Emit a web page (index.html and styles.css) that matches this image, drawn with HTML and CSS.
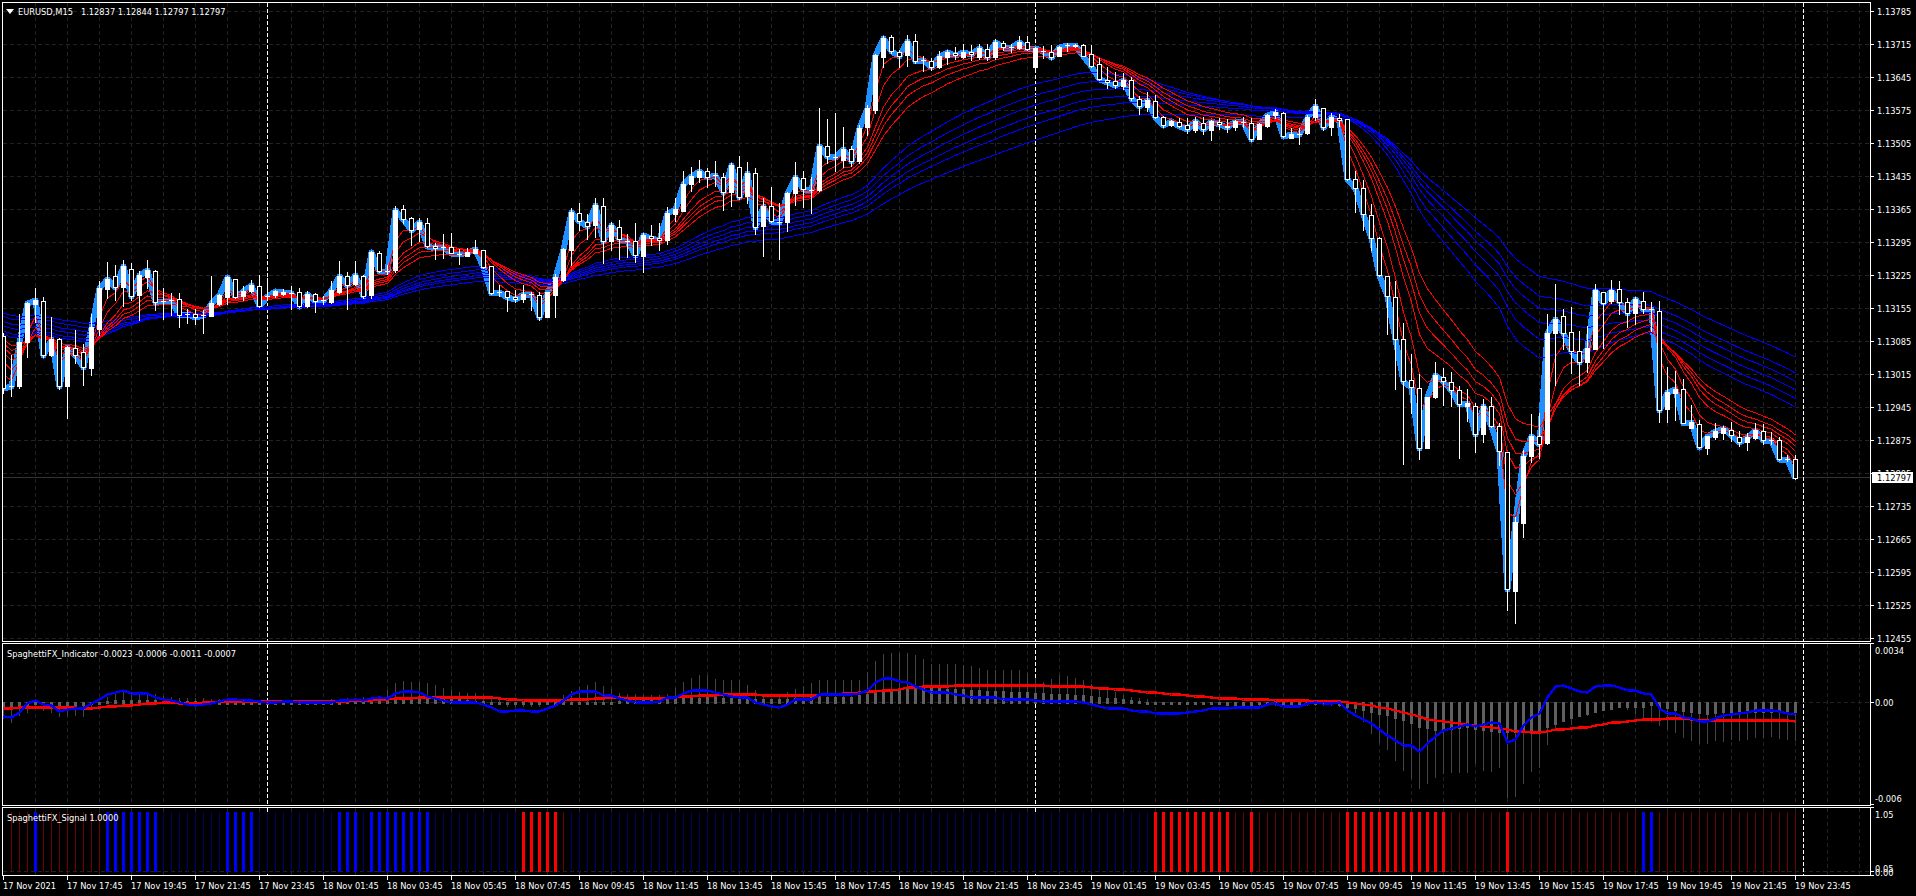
FILE: index.html
```html
<!DOCTYPE html>
<html lang="en">
<head>
<meta charset="utf-8">
<title>EURUSD,M15</title>
<link rel="stylesheet" href="styles.css">
</head>
<body>
<main class="terminal">
  <section class="pane pane-main">
    <div class="plot">
      <svg id="chart-price" class="plot-svg" viewBox="3 3 1867 638" width="1867" height="638"></svg>
      <div class="legend legend-main">
        <svg class="legend-arrow" viewBox="0 0 8 5" width="8" height="5"><polygon points="0,0 8,0 4,5"/></svg>
        <span class="legend-symbol">EURUSD,M15</span>
        <span>1.12837 1.12844 1.12797 1.12797</span>
      </div>
    </div>
    <div class="axis axis-price">
      <span class="level">1.13785</span><span class="level">1.13715</span><span class="level">1.13645</span><span class="level">1.13575</span>
      <span class="level">1.13505</span><span class="level">1.13435</span><span class="level">1.13365</span><span class="level">1.13295</span>
      <span class="level">1.13225</span><span class="level">1.13155</span><span class="level">1.13085</span><span class="level">1.13015</span>
      <span class="level">1.12945</span><span class="level">1.12875</span><span class="level">1.12805</span><span class="level">1.12735</span>
      <span class="level">1.12665</span><span class="level">1.12595</span><span class="level">1.12525</span><span class="level">1.12455</span>
      <span class="bid-tag">1.12797</span>
    </div>
  </section>

  <section class="pane pane-indicator">
    <div class="plot">
      <svg id="chart-indicator" class="plot-svg" viewBox="3 644 1867 161" width="1867" height="161"></svg>
      <div class="legend legend-sub">SpaghettiFX_Indicator -0.0023 -0.0006 -0.0011 -0.0007</div>
    </div>
    <div class="axis axis-scale">
      <i class="tick tick-ind-top"></i><span class="scale-label ind-top">0.0034</span>
      <i class="tick tick-ind-zero"></i><span class="scale-label ind-zero">0.00</span>
      <i class="tick tick-ind-bottom"></i><span class="scale-label ind-bottom">-0.006</span>
    </div>
  </section>

  <section class="pane pane-signal">
    <div class="plot">
      <svg id="chart-signal" class="plot-svg" viewBox="3 808 1867 67" width="1867" height="67"></svg>
      <div class="legend legend-sub">SpaghettiFX_Signal 1.0000</div>
    </div>
    <div class="axis axis-scale">
      <i class="tick tick-sig-top"></i><span class="scale-label sig-top">1.05</span>
      <i class="tick tick-sig-low"></i><span class="scale-label sig-low">0.05</span>
      <i class="tick tick-sig-bottom"></i><span class="scale-label sig-bottom">0.00</span>
    </div>
  </section>

  <footer class="time-axis">
    <span class="time">17 Nov 2021</span><span class="time">17 Nov 17:45</span><span class="time">17 Nov 19:45</span><span class="time">17 Nov 21:45</span><span class="time">17 Nov 23:45</span>
    <span class="time">18 Nov 01:45</span><span class="time">18 Nov 03:45</span><span class="time">18 Nov 05:45</span><span class="time">18 Nov 07:45</span><span class="time">18 Nov 09:45</span><span class="time">18 Nov 11:45</span>
    <span class="time">18 Nov 13:45</span><span class="time">18 Nov 15:45</span><span class="time">18 Nov 17:45</span><span class="time">18 Nov 19:45</span><span class="time">18 Nov 21:45</span><span class="time">18 Nov 23:45</span>
    <span class="time">19 Nov 01:45</span><span class="time">19 Nov 03:45</span><span class="time">19 Nov 05:45</span><span class="time">19 Nov 07:45</span><span class="time">19 Nov 09:45</span><span class="time">19 Nov 11:45</span>
    <span class="time">19 Nov 13:45</span><span class="time">19 Nov 15:45</span><span class="time">19 Nov 17:45</span><span class="time">19 Nov 19:45</span><span class="time">19 Nov 21:45</span><span class="time">19 Nov 23:45</span>
  </footer>
</main>
<script src="chart.js"></script>
</body>
</html>
```

FILE: styles.css
```css
* { box-sizing: border-box; }

html, body {
  margin: 0;
  background: #000;
}

body {
  width: 1916px;
  height: 896px;
  overflow: hidden;
  color: #fff;
  font-family: "DejaVu Sans", "Noto Sans", sans-serif;
  font-stretch: condensed;
  font-size: 9.2px;
  line-height: 13px;
}

.terminal {
  display: flex;
  flex-direction: column;
  gap: 1px;
  padding: 2px 0 0 2px;
  height: 896px;
}

.pane { display: flex; }
.pane-main { height: 640px; }
.pane-indicator { height: 163px; }
.pane-signal { height: 69px; }

.plot {
  position: relative;
  width: 1869px;
  height: 100%;
  border: 1px solid #fff;
  background: #000;
}

.plot-svg { display: block; }

.legend {
  position: absolute;
  white-space: nowrap;
  display: flex;
  align-items: center;
}

.legend-main { left: 3px; top: 2px; }
.legend-arrow { fill: #fff; margin-right: 4px; }
.legend-symbol { margin-right: 8px; }
.legend-sub { left: 4px; top: 3px; }

.axis {
  position: relative;
  flex: 1;
}

.axis-price {
  display: flex;
  flex-direction: column;
  gap: 20px;
  padding-top: 3px;
  height: 650px;
}

.level {
  display: flex;
  align-items: center;
  height: 13px;
}

.level::before {
  content: "";
  width: 3px;
  height: 1px;
  margin-right: 3px;
  background: #fff;
}

.bid-tag {
  position: absolute;
  left: 1px;
  top: 470px;
  width: 41px;
  height: 11px;
  padding-left: 5px;
  line-height: 11px;
  background: #fff;
  color: #000;
}

.tick {
  position: absolute;
  left: 0;
  width: 3px;
  height: 1px;
  background: #fff;
}

.scale-label {
  position: absolute;
  left: 4px;
}

.tick-ind-top { top: 0; }
.ind-top { top: 1px; }
.tick-ind-zero { top: 59px; }
.ind-zero { top: 53px; }
.tick-ind-bottom { top: 161px; }
.ind-bottom { top: 149px; }

.tick-sig-top { top: 0; }
.sig-top { top: 1px; }
.tick-sig-low { top: 64px; }
.sig-low { top: 55px; }
.tick-sig-bottom { top: 68px; }
.sig-bottom { top: 59px; }

.time-axis {
  display: flex;
  padding-left: 1px;
  margin-top: -1px;
}

.time {
  flex: 0 0 64px;
  white-space: nowrap;
  display: block;
}

.time::before {
  content: "";
  display: block;
  width: 1px;
  height: 4px;
  background: #fff;
  margin-bottom: -1px;
}
```

FILE: chart.js
```js
// Pixel-space market data read off the chart. Bars sit on a fixed 8px pitch.
// Candle: [high, body top, body bottom, low, filled]
const BARS = [
[333,336,388,393,0],[355,386,386,396,0],[314,342,386,388,1],[302,303,342,357,1],[288,300,304,322,1],
[297,301,355,357,0],[317,339,355,356,1],[338,339,386,389,0],[346,347,386,418,1],[330,348,355,363,0],
[344,352,367,385,0],[314,327,368,375,1],[281,288,329,335,1],[262,279,289,298,1],[265,276,287,300,0],
[260,266,287,306,1],[263,269,296,300,0],[271,275,295,320,1],[260,270,277,288,1],[270,271,302,310,0],
[288,301,301,319,0],[293,300,300,315,0],[293,299,315,327,0],[309,314,314,323,0],[309,314,317,324,0],
[310,315,315,333,0],[276,303,316,316,1],[294,295,304,305,1],[276,277,297,304,1],[279,279,297,298,0],
[286,291,296,300,1],[280,285,291,292,1],[275,286,306,307,0],[278,296,296,300,0],[290,291,295,297,1],
[289,292,294,295,1],[286,293,293,309,0],[288,292,306,307,0],[291,294,306,307,1],[293,294,301,312,0],
[296,300,300,304,0],[281,290,302,303,1],[261,276,292,293,1],[272,276,285,309,0],[261,275,284,285,1],
[275,276,296,298,0],[251,252,295,298,1],[251,253,271,272,0],[265,271,271,274,0],[206,210,270,272,1],
[205,209,219,223,0],[217,218,230,245,0],[218,222,229,241,1],[218,223,246,247,0],[243,246,248,259,0],
[234,247,247,258,0],[233,247,253,253,0],[249,254,254,264,0],[248,252,256,256,1],[240,249,253,253,1],
[250,250,267,268,0],[266,266,293,294,0],[285,292,292,296,0],[291,291,297,311,0],[290,297,299,302,0],
[285,294,299,302,1],[292,294,294,310,0],[292,295,317,320,0],[292,292,317,317,1],[274,277,295,317,1],
[248,249,280,281,1],[208,212,250,265,1],[203,213,221,230,0],[214,222,226,239,0],[198,205,225,237,1],
[198,206,241,263,0],[222,225,241,250,1],[220,227,239,259,0],[234,241,241,257,0],[223,241,255,262,0],
[233,235,256,272,1],[225,236,238,245,0],[223,238,240,250,0],[207,213,240,244,1],[198,209,214,221,1],
[171,184,211,211,1],[167,176,184,191,1],[160,171,177,182,1],[168,171,177,187,0],[161,175,175,186,0],
[173,177,192,210,0],[163,165,192,206,1],[156,167,197,199,0],[162,173,196,203,1],[168,173,227,234,0],
[198,206,226,256,1],[187,206,221,222,0],[203,222,222,259,0],[192,193,222,231,1],[162,177,193,205,1],
[171,178,189,207,0],[177,190,190,213,0],[108,146,190,191,1],[119,146,156,163,0],[113,157,157,171,0],
[127,149,160,167,1],[146,149,161,166,0],[125,128,161,163,1],[105,108,127,135,1],[54,55,110,113,1],
[36,38,57,67,1],[35,37,51,53,0],[50,52,56,67,0],[35,41,55,66,1],[34,41,61,63,0],
[56,60,60,71,0],[58,61,67,70,0],[51,56,67,68,1],[50,52,57,64,1],[47,53,55,59,0],
[44,52,57,58,1],[45,52,54,60,0],[44,48,57,59,1],[44,49,57,60,0],[39,42,57,59,1],
[41,43,47,50,0],[44,47,47,52,0],[36,42,48,49,1],[36,42,49,50,0],[47,48,67,71,1],
[46,51,51,58,0],[45,52,57,59,0],[46,47,56,56,1],[43,45,45,51,0],[44,45,46,47,1],
[44,45,56,56,0],[45,54,66,67,0],[58,64,79,80,0],[67,80,82,88,0],[72,81,85,88,0],
[73,80,86,89,1],[77,80,98,100,0],[96,99,106,114,0],[92,100,107,111,1],[95,101,117,118,0],
[116,117,125,127,0],[120,121,125,126,1],[118,122,126,127,0],[118,125,129,133,0],[117,121,130,132,1],
[117,123,129,134,0],[120,121,130,140,1],[118,122,124,129,0],[119,126,127,132,0],[120,121,127,130,1],
[117,122,122,127,0],[118,123,139,141,0],[123,124,139,139,1],[114,115,126,127,1],[109,112,115,118,1],
[112,113,136,137,0],[128,134,138,138,1],[128,134,134,144,0],[115,117,133,134,1],[99,106,117,120,1],
[108,108,127,130,0],[113,117,127,135,1],[114,118,120,126,0],[119,119,179,180,0],[171,179,188,212,0],
[180,188,214,230,0],[204,215,238,250,0],[237,238,275,276,0],[276,276,296,334,0],[281,297,339,389,0],
[323,339,381,464,0],[354,380,387,413,0],[374,388,448,459,0],[397,397,448,448,1],[362,375,397,398,1],
[368,377,381,405,0],[372,382,390,406,0],[386,390,404,458,0],[389,403,406,421,1],[403,406,434,452,0],
[399,406,434,442,1],[397,406,426,427,0],[423,426,451,465,0],[452,452,589,610,0],[517,522,591,623,1],
[450,456,523,537,1],[414,436,456,462,1],[413,436,444,458,0],[314,333,443,444,1],[284,319,333,385,1],
[309,316,333,349,0],[307,332,351,373,0],[331,351,362,385,0],[326,348,362,372,1],[284,290,349,349,1],
[292,292,303,348,0],[280,290,301,303,1],[281,289,302,314,0],[298,302,313,327,0],[297,299,313,324,1],
[292,301,309,313,0],[302,309,309,331,0],[301,311,410,422,0],[367,392,409,422,1],[371,389,393,420,1],
[379,389,423,423,0],[405,422,428,428,1],[420,424,447,448,0],[436,436,448,454,1],[423,431,437,439,1],
[426,428,433,439,1],[422,430,435,441,0],[431,437,442,446,0],[433,437,442,450,1],[423,430,438,439,1],
[424,431,440,444,0],[432,440,440,444,0],[437,440,459,460,0],[455,459,459,461,0],[455,459,478,479,0]
];

const BLUE = [[3,716],[10,718],[19,712],[27,703],[35,700],[43,704],[52,705],[60,712],[68,708],[83,708],[97,700],[105,694],[115,692],[123,690],[132,693],[148,693],[158,698],[170,700],[182,703],[197,705],[207,704],[217,702],[227,699],[253,700],[267,702],[283,701],[300,702],[330,702],[340,700],[358,699],[365,701],[372,697],[388,698],[397,691],[405,691],[418,691],[428,696],[440,699],[450,702],[477,702],[488,705],[500,711],[521,710],[539,711],[550,707],[562,701],[573,692],[579,691],[595,691],[604,695],[612,695],[620,698],[633,702],[643,702],[660,701],[666,697],[674,697],[682,693],[691,690],[709,690],[720,694],[728,695],[736,697],[749,697],[757,704],[765,704],[774,707],[782,707],[794,699],[803,699],[807,700],[813,699],[819,694],[857,694],[867,690],[875,682],[884,678],[892,678],[898,681],[908,682],[915,686],[931,692],[948,692],[956,694],[973,697],[993,697],[1006,699],[1022,699],[1043,701],[1068,701],[1076,701],[1089,703],[1105,708],[1122,708],[1134,711],[1150,711],[1156,713],[1171,713],[1191,712],[1204,710],[1212,708],[1227,708],[1233,707],[1250,707],[1258,707],[1266,704],[1274,703],[1283,706],[1299,706],[1310,702],[1332,703],[1339,702],[1349,712],[1372,723],[1382,732],[1395,740],[1403,745],[1411,745],[1419,751],[1432,738],[1442,730],[1453,727],[1469,724],[1478,727],[1486,722],[1494,722],[1500,723],[1507,742],[1515,739],[1523,725],[1531,717],[1540,713],[1548,695],[1556,685],[1565,685],[1581,692],[1587,692],[1596,685],[1614,685],[1627,690],[1635,690],[1643,693],[1652,694],[1660,710],[1668,713],[1674,713],[1683,717],[1691,718],[1699,721],[1708,721],[1722,715],[1743,713],[1755,710],[1770,710],[1784,712],[1795,714]];

const RED = [[3,708],[28,707],[68,707],[90,708],[110,706],[127,705],[150,703],[167,702],[190,703],[207,702],[227,701],[267,701],[300,701],[333,701],[370,700],[400,698],[433,697],[483,697],[500,698],[508,699],[523,700],[560,700],[579,699],[595,698],[616,697],[629,698],[666,698],[699,695],[732,694],[761,694],[765,695],[817,695],[844,693],[873,691],[892,690],[908,687],[923,686],[946,686],[950,685],[1043,685],[1045,686],[1080,686],[1101,688],[1126,689],[1134,691],[1150,692],[1162,693],[1187,695],[1220,698],[1258,699],[1291,700],[1337,701],[1366,704],[1386,708],[1411,714],[1428,719],[1449,722],[1473,725],[1502,728],[1515,731],[1544,732],[1556,729],[1585,727],[1606,723],[1643,719],[1681,718],[1697,720],[1788,720],[1795,721]];

const HIST = [[3,706],[35,704],[60,705],[83,705],[100,702],[115,700],[150,700],[170,701],[260,702],[330,702],[360,701],[397,698],[433,698],[470,700],[500,703],[560,703],[600,702],[650,700],[710,697],[750,699],[780,699],[820,697],[850,697],[873,693],[892,690],[906,687],[923,688],[956,689],[993,691],[1039,693],[1080,695],[1101,697],[1130,700],[1150,703],[1250,705],[1258,703],[1332,704],[1349,707],[1370,712],[1386,715],[1403,720],[1420,727],[1436,730],[1450,729],[1467,727],[1482,730],[1502,732],[1515,732],[1531,732],[1548,727],[1565,720],[1581,715],[1596,712],[1604,710],[1619,707],[1643,707],[1652,705],[1660,707],[1677,710],[1691,712],[1708,714],[1722,712],[1740,712],[1755,712],[1795,712]];

const HIST_THIN = [[3,718],[11,722],[19,715],[35,708],[52,712],[60,716],[68,715],[83,716],[90,709],[100,702],[115,692],[148,692],[165,697],[190,698],[230,699],[270,700],[300,701],[340,699],[365,697],[380,696],[397,681],[420,682],[435,685],[443,688],[458,692],[475,693],[500,700],[506,706],[541,706],[579,687],[595,682],[620,693],[643,695],[666,695],[682,682],[699,675],[707,675],[716,680],[740,680],[749,687],[770,698],[819,680],[860,680],[867,672],[875,661],[884,653],[908,653],[915,655],[923,659],[931,664],[956,664],[973,666],[985,670],[1018,670],[1027,673],[1043,682],[1060,675],[1085,680],[1097,687],[1114,692],[1130,697],[1147,699],[1150,704],[1330,705],[1337,705],[1353,710],[1364,722],[1372,734],[1380,743],[1388,750],[1395,760],[1404,771],[1411,778],[1419,788],[1427,783],[1435,777],[1444,773],[1451,772],[1460,772],[1468,772],[1475,763],[1483,770],[1491,771],[1499,767],[1507,797],[1515,796],[1523,783],[1531,771],[1540,766],[1547,744],[1555,728],[1564,719],[1572,725],[1579,715],[1587,715],[1596,710],[1604,708],[1612,706],[1620,705],[1660,725],[1668,730],[1676,732],[1684,738],[1692,740],[1699,743],[1708,743],[1715,740],[1723,741],[1731,739],[1740,740],[1747,739],[1755,737],[1764,737],[1771,736],[1779,738],[1788,739],[1795,740]];

// Signal runs: [first bar, last bar, kind]
const SIGNAL = [
  [1,3,"dr"],[4,4,"B"],[5,12,"dr"],[13,19,"B"],[20,27,"db"],[28,31,"B"],[32,41,"db"],[42,44,"B"],[45,45,"db"],
  [46,53,"B"],[54,64,"db"],[65,69,"R"],[70,70,"dr"],[71,143,"db"],[144,153,"R"],[154,155,"dr"],[156,156,"R"],
  [157,167,"dr"],[168,180,"R"],[181,187,"dr"],[188,188,"R"],[189,204,"dr"],[205,206,"B"],[207,224,"dr"]
];
const SIGNAL_COLORS = { B: "#0000ff", R: "#ff0000", db: "#000070", dr: "#700000" };

const RED_EMA = [[3,360],[5,348],[8,342],[10,338],[12,335],[15,332]];
// [period, seed, extra lag at the top of the rally]
const BLUE_EMA = [[30,330,0],[35,327,2],[40,322,3],[45,318,5],[50,313,6],[60,310,8]];

const GRID = "#222";
const barX = (i) => 3 + 8 * i;
const SEPARATORS = [267, 1035, 1803];

function interp(points, x) {
  if (x <= points[0][0]) return points[0][1];
  for (let k = 1; k < points.length; k++) {
    if (x <= points[k][0]) {
      const [x0, y0] = points[k - 1], [x1, y1] = points[k];
      return Math.round(y0 + (y1 - y0) * (x - x0) / (x1 - x0));
    }
  }
  return points[points.length - 1][1];
}

function gridLines(y0, y1, hLevels) {
  let s = `<g stroke="${GRID}" stroke-dasharray="4 3" shape-rendering="crispEdges">`;
  for (let x = 35; x < 1870; x += 32) s += `<line x1="${x + .5}" x2="${x + .5}" y1="${y0}" y2="${y1}"/>`;
  for (const y of hLevels) s += `<line x1="3" x2="1870" y1="${y + .5}" y2="${y + .5}"/>`;
  return s + "</g>";
}

function separators(y0, y1) {
  return `<g stroke="#fff" stroke-dasharray="4 2" shape-rendering="crispEdges">` +
    SEPARATORS.map((x) => `<line x1="${x + .5}" x2="${x + .5}" y1="${y0}" y2="${y1}"/>`).join("") + "</g>";
}

function polyline(points, color, width) {
  const pts = points.map(([x, y]) => `${x + .5},${y + .5}`).join(" ");
  return `<polyline points="${pts}" fill="none" stroke="${color}" stroke-width="${width}" stroke-linejoin="round" shape-rendering="crispEdges"/>`;
}

// Smooth bump centred on the top of the rally, zero outside 860..1250.
function lagAt(x) {
  if (x < 860 || x > 1250) return 0;
  const t = x < 1035 ? (x - 860) / 175 : (1250 - x) / 215;
  return t * t * (3 - 2 * t);
}

function drawPrice() {
  const closes = BARS.map((b) => (b[4] ? b[1] : b[2]));
  const levels = [];
  for (let k = 0; k < 20; k++) levels.push(11 + 33 * k);
  let s = gridLines(3, 641, levels);
  s += `<line x1="3" x2="1870" y1="477.5" y2="477.5" stroke="#333" shape-rendering="crispEdges"/>`;
  s += separators(3, 641);
  s += polyline(closes.map((c, i) => [barX(i), c]), "#1e90ff", 6);

  const ema = (period, seed, lag = 0) => {
    const a = 2 / (period + 1);
    let v = seed;
    return closes.map((c, i) => {
      v += a * (c - v);
      return [barX(i), v + lag * lagAt(barX(i))];
    });
  };
  for (const [p, seed, lag] of BLUE_EMA) s += polyline(ema(p, seed, lag), "#0000ff", 1);
  for (const [p, seed] of RED_EMA) s += polyline(ema(p, seed), "#ff0000", 1);

  let wicks = "", bodies = "";
  BARS.forEach(([h, t, b, l, filled], i) => {
    const x = barX(i);
    wicks += `M${x + .5} ${h}V${l + 1}`;
    if (filled) {
      bodies += `<rect x="${x - 2}" y="${t}" width="5" height="${b - t + 1}" fill="#fff"/>`;
    } else if (t === b) {
      bodies += `<rect x="${x - 2}" y="${t}" width="5" height="1" fill="#fff"/>`;
    } else {
      bodies += `<rect x="${x - 1.5}" y="${t + .5}" width="4" height="${b - t}" fill="#000" stroke="#fff"/>`;
    }
  });
  s += `<g shape-rendering="crispEdges"><path d="${wicks}" stroke="#fff" fill="none"/>${bodies}</g>`;
  document.getElementById("chart-price").innerHTML = s;
}

function drawIndicator() {
  let s = gridLines(644, 805, [702]) + separators(644, 805);
  let bars = "";
  BARS.forEach((_, i) => {
    const x = barX(i);
    const thin = interp(HIST_THIN, x), thick = interp(HIST, x);
    const tt = Math.min(thin, 702), tb = Math.max(thin, 702);
    bars += `<rect x="${x}" y="${tt}" width="1" height="${tb - tt + 1}" fill="#444"/>`;
    const ht = Math.min(thick, 702), hb = Math.max(thick, 702 + 1);
    bars += `<rect x="${x - 1}" y="${ht}" width="3" height="${Math.max(hb - ht, 2) + 1}" fill="#5f5f5f"/>`;
  });
  s += `<g shape-rendering="crispEdges">${bars}</g>`;
  const series = (pts) => BARS.map((_, i) => [barX(i), interp(pts, barX(i))]);
  s += polyline(series(RED), "#ff0000", 2.4);
  s += polyline(series(BLUE), "#0000ff", 2.4);
  document.getElementById("chart-indicator").innerHTML = s;
}

function drawSignal() {
  let s = gridLines(808, 875, [871]) + separators(808, 875);
  let bars = "";
  for (const [from, to, kind] of SIGNAL) {
    const strong = kind === "B" || kind === "R";
    for (let i = from; i <= to; i++) {
      const x = barX(i);
      bars += strong
        ? `<rect x="${x - 1}" y="812" width="3" height="60" fill="${SIGNAL_COLORS[kind]}"/>`
        : `<rect x="${x}" y="812" width="1" height="60" fill="${SIGNAL_COLORS[kind]}"/>`;
    }
  }
  s += `<g shape-rendering="crispEdges">${bars}</g>`;
  document.getElementById("chart-signal").innerHTML = s;
}

drawPrice();
drawIndicator();
drawSignal();
```
